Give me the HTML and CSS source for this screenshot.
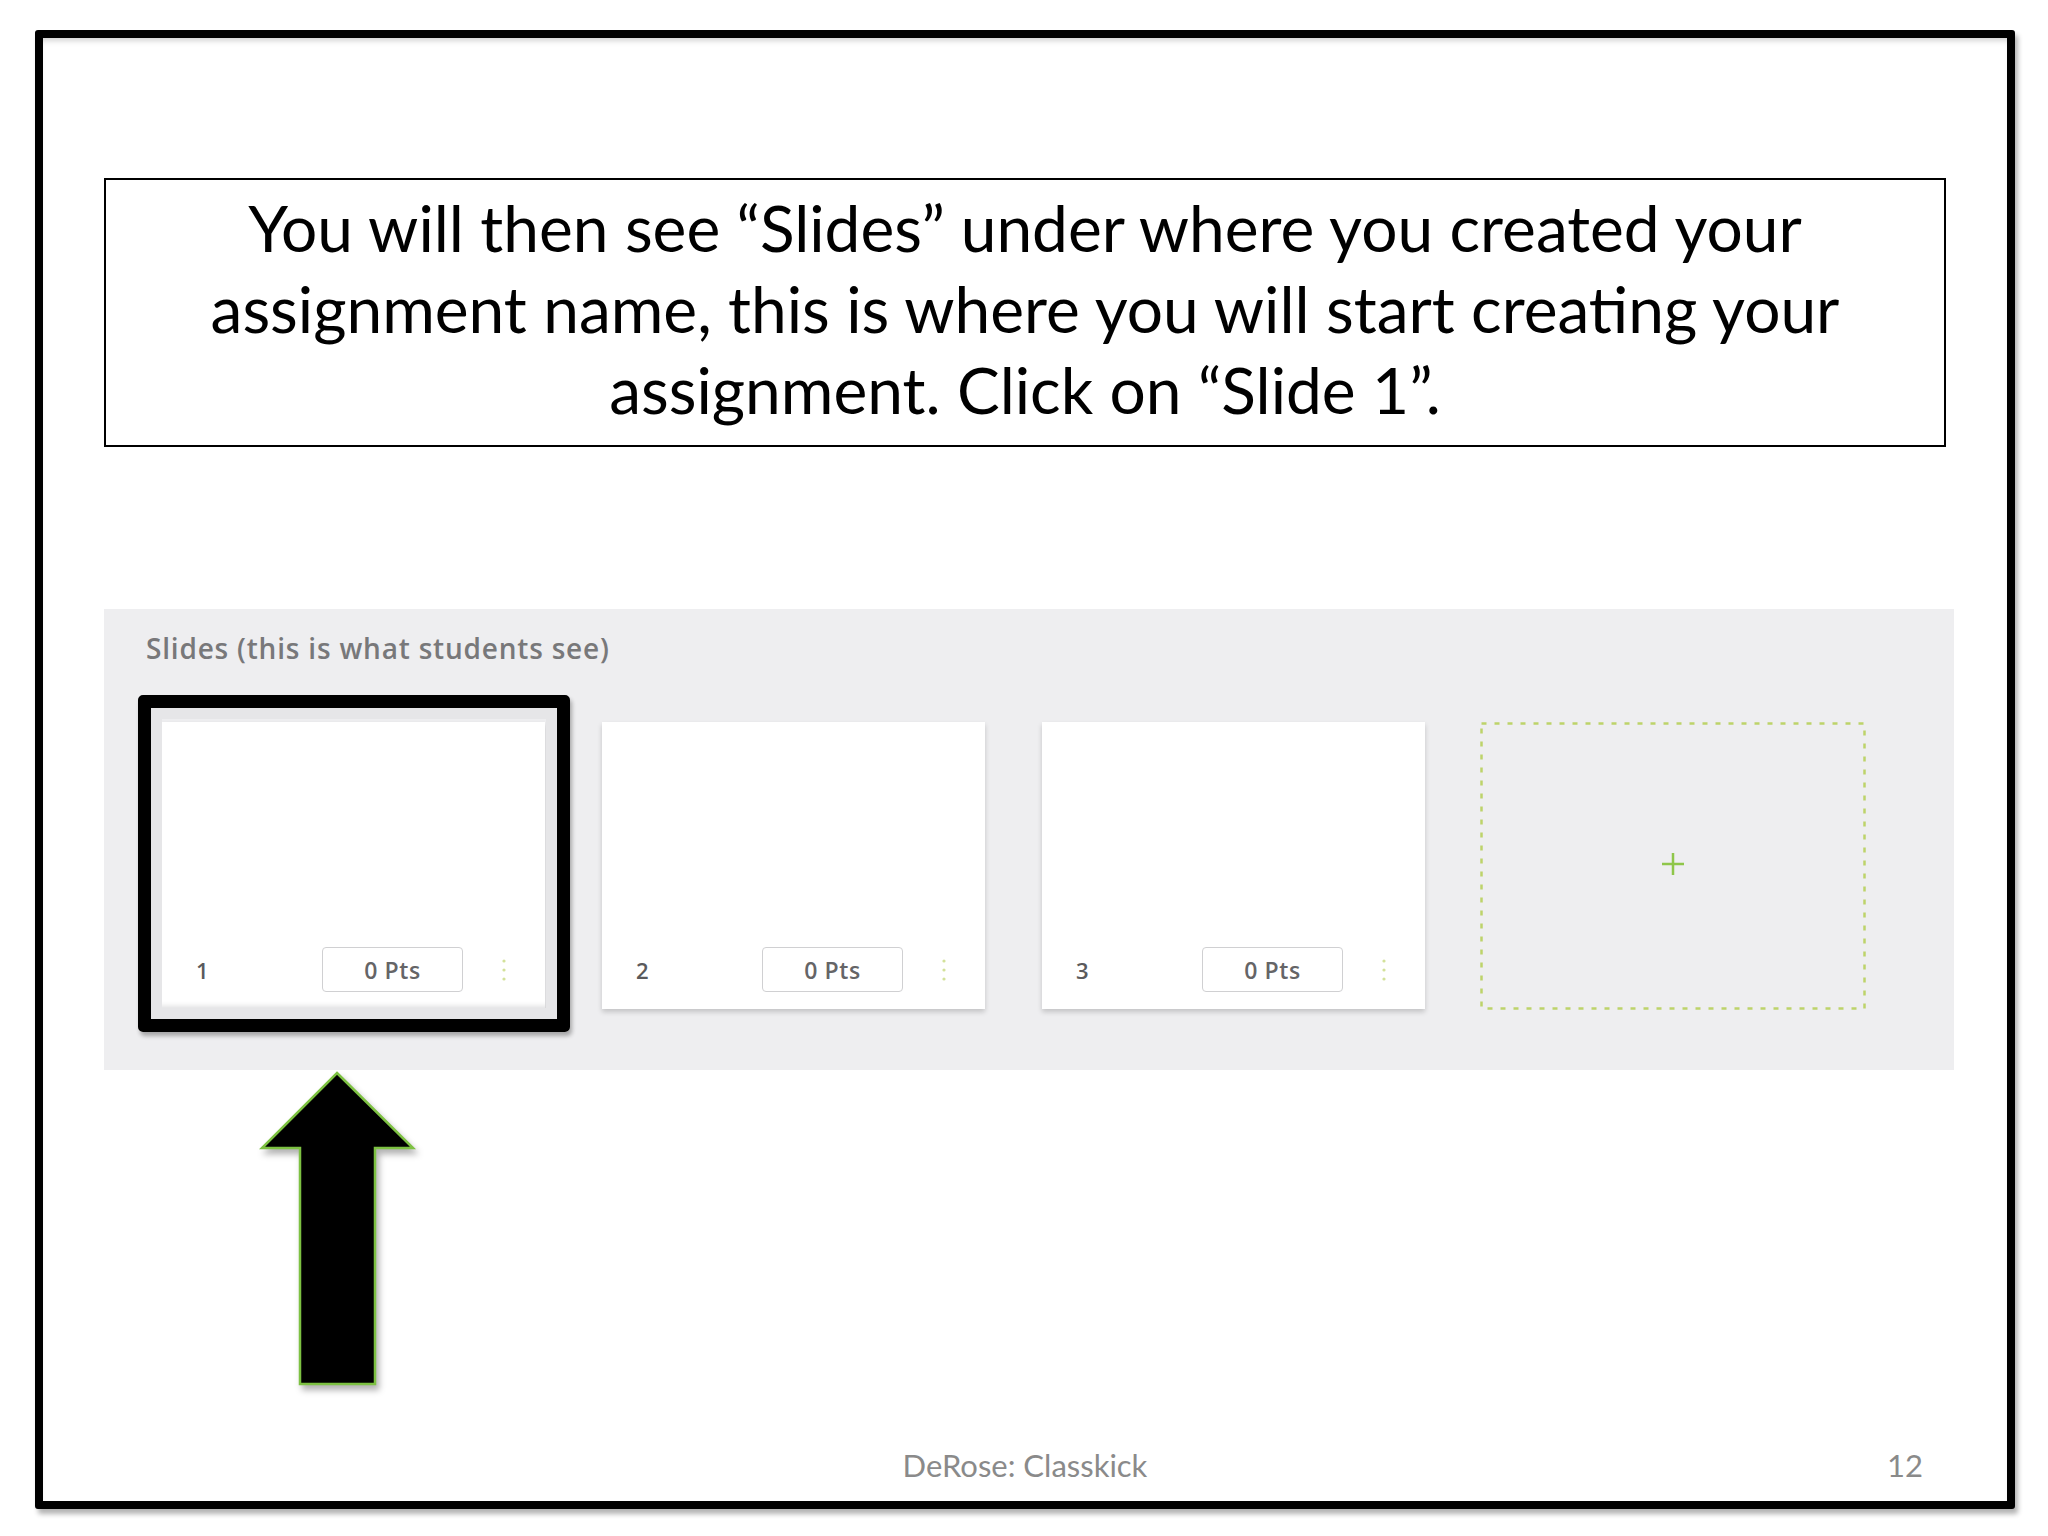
FILE: index.html
```html
<!DOCTYPE html>
<html lang="en">
<head>
<meta charset="utf-8">
<title>DeRose: Classkick - 12</title>
<link rel="stylesheet" href="styles.css">
</head>
<body>
<div class="slide">
  <div class="callout">
    <p class="line">You will then see “Slides” under where you created your</p>
    <p class="line">assignment name, this is where you will start creating your</p>
    <p class="line">assignment. Click on “Slide 1”.</p>
  </div>

  <section class="panel">
    <h2 class="panel-title">Slides (this is what students see)</h2>
    <div class="cards">
      <div class="card selected">
        <div class="card-foot">
          <span class="num">1</span>
          <span class="pts">0 Pts</span>
          <svg class="dots" width="6" height="24" viewBox="0 0 6 24"><circle cx="3" cy="3" r="1.6"/><circle cx="3" cy="12" r="1.6"/><circle cx="3" cy="21" r="1.6"/></svg>
        </div>
        <div class="highlight"></div>
      </div>
      <div class="card">
        <div class="card-foot">
          <span class="num">2</span>
          <span class="pts">0 Pts</span>
          <svg class="dots" width="6" height="24" viewBox="0 0 6 24"><circle cx="3" cy="3" r="1.6"/><circle cx="3" cy="12" r="1.6"/><circle cx="3" cy="21" r="1.6"/></svg>
        </div>
      </div>
      <div class="card">
        <div class="card-foot">
          <span class="num">3</span>
          <span class="pts">0 Pts</span>
          <svg class="dots" width="6" height="24" viewBox="0 0 6 24"><circle cx="3" cy="3" r="1.6"/><circle cx="3" cy="12" r="1.6"/><circle cx="3" cy="21" r="1.6"/></svg>
        </div>
      </div>
      <svg class="add-card" width="386" height="288" viewBox="0 0 386 288">
        <rect x="1.5" y="1.5" width="383" height="285" fill="none" stroke="#bdd36a" stroke-width="2.5" stroke-dasharray="5 8"/>
        <path d="M193 131 V153 M182 142 H204" stroke="#8fc64a" stroke-width="2.5" fill="none"/>
      </svg>
    </div>
  </section>

  <svg class="arrow" width="170" height="330" viewBox="0 0 170 330">
    <polygon points="82,5 158,80 120,80 120,316 45,316 45,80 7,80" fill="#000" stroke="#7dc142" stroke-width="2.5" stroke-linejoin="miter"/>
  </svg>

  <footer class="foot">
    <span></span>
    <span class="foot-title">DeRose: Classkick</span>
    <span class="foot-num">12</span>
  </footer>
</div>
</body>
</html>
```

FILE: styles.css
```css
html, body {
  margin: 0;
  padding: 0;
  background: #ffffff;
}

body {
  width: 2048px;
  height: 1536px;
  overflow: hidden;
  font-family: Lato, "Liberation Sans", sans-serif;
}

.slide {
  box-sizing: border-box;
  width: 1980px;
  height: 1479px;
  margin: 30px 0 0 35px;
  border: 8px solid #000;
  border-radius: 3px;
  background: #fff;
  box-shadow: 3px 5px 5px rgba(0, 0, 0, 0.3), inset 0 6px 6px -4px rgba(0, 0, 0, 0.22);
  display: flex;
  flex-direction: column;
}

.callout {
  box-sizing: border-box;
  width: 1842px;
  height: 269px;
  margin: 140px 0 0 61px;
  border: 2px solid #000;
  padding-top: 7px;
  text-align: center;
  color: #000;
}

.line {
  margin: 0;
  font-size: 64px;
  line-height: 81px;
  white-space: nowrap;
}

.panel {
  box-sizing: border-box;
  width: 1850px;
  height: 461px;
  margin: 162px 0 0 61px;
  padding: 22px 0 0 42px;
  background: #eeeef0;
}

.panel-title {
  margin: 0;
  font-family: "Open Sans", sans-serif;
  font-weight: 600;
  font-size: 28px;
  letter-spacing: 0.8px;
  line-height: 35px;
  color: #78787a;
}

.cards {
  display: flex;
  gap: 57px;
  margin: 56px 0 0 16px;
  align-items: flex-start;
}

.card {
  position: relative;
  box-sizing: border-box;
  width: 383px;
  height: 287px;
  background: #fff;
  box-shadow: 0 3px 5px rgba(0, 0, 0, 0.18);
  display: flex;
  align-items: flex-end;
  padding: 0 0 17px 34px;
}

.card-foot {
  display: flex;
  align-items: center;
  font-family: "Open Sans", sans-serif;
  font-weight: 600;
  color: #5a5a5c;
}

.num {
  width: 126px;
  font-size: 22px;
}

.pts {
  box-sizing: border-box;
  width: 141px;
  height: 45px;
  border: 1.5px solid #d0d0d2;
  border-radius: 4px;
  display: flex;
  align-items: center;
  justify-content: center;
  font-size: 23px;
  letter-spacing: 0.6px;
  color: #656567;
  background: #fff;
}

.dots {
  margin-left: 38px;
  fill: #d3e19a;
}

.highlight {
  position: absolute;
  left: -24px;
  top: -27px;
  right: -25px;
  bottom: -23px;
  border: 13px solid #000;
  border-radius: 5px;
  box-shadow: 2px 4px 4px rgba(0, 0, 0, 0.3), inset 0 0 0 11px #e6e6e8, inset 0 -14px 6px -2px #d6d6d8;
  pointer-events: none;
}

.add-card {
  display: block;
  margin-left: -2px;
}

.arrow {
  display: block;
  margin: -2px 0 0 212px;
  filter: drop-shadow(3px 5px 3px rgba(0, 0, 0, 0.3));
}

.foot {
  margin-top: auto;
  display: grid;
  grid-template-columns: 1fr auto 1fr;
  padding: 0 84px 18px 84px;
  font-family: Lato, sans-serif;
  font-size: 31px;
  line-height: 36px;
  color: #8a8a8a;
}

.foot-num {
  justify-self: end;
}
```
